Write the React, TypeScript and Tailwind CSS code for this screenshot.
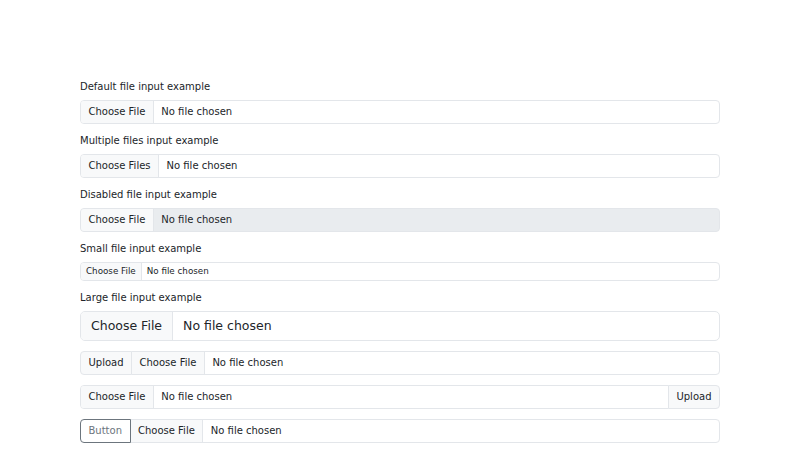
import React from "react";

const font = { fontFamily: '"DejaVu Sans", Verdana, sans-serif' };

function FileBtn({ label = "Choose File", size = "md" }: { label?: string; size?: "sm" | "md" | "lg" }) {
  const cls =
    size === "sm"
      ? "px-[5px] text-[8.75px]"
      : size === "lg"
      ? "px-[10px] text-[12.5px]"
      : "px-[7.5px] text-[10px]";
  return (
    <div className={`flex h-full items-center pb-px bg-[#f8f9fa] border-r border-[#e3e6ea] ${cls}`}>{label}</div>
  );
}

function FileInput({ label = "Choose File", size = "md", disabled = false, extra = "rounded-[4px]" }: { label?: string; size?: "sm" | "md" | "lg"; disabled?: boolean; extra?: string }) {
  const h = size === "sm" ? "h-[19px]" : size === "lg" ? "h-[30px]" : "h-[24px]";
  const txt =
    size === "sm"
      ? "pl-[5px] text-[8.75px]"
      : size === "lg"
      ? "pl-[10px] text-[12.5px]"
      : "pl-[7.5px] text-[10px]";
  const radius = size === "sm" ? "rounded-[3px]" : size === "lg" ? "rounded-[5px]" : "";
  return (
    <div
      className={`flex flex-1 items-center overflow-hidden border border-[#e3e6ea] text-[#212529] ${h} ${extra} ${radius} ${disabled ? "bg-[#e9ecef]" : "bg-white"}`}
    >
      <FileBtn label={label} size={size} />
      <div className={`pb-px ${txt}`}>No file chosen</div>
    </div>
  );
}

function Field({ title, children }: { title: string; children: React.ReactNode }) {
  return (
    <div className="mb-[10px]">
      <div className="mb-[7px] text-[10px] leading-[13px] text-[#212529]">{title}</div>
      <div className="flex">{children}</div>
    </div>
  );
}

export default function App() {
  return (
    <div className="min-h-[450px] w-[800px] bg-white" style={font}>
      <div className="mx-auto w-[640px] pt-[80px] leading-[15px]">
        <Field title="Default file input example">
          <FileInput />
        </Field>
        <Field title="Multiple files input example">
          <FileInput label="Choose Files" />
        </Field>
        <Field title="Disabled file input example">
          <FileInput disabled />
        </Field>
        <Field title="Small file input example">
          <FileInput size="sm" />
        </Field>
        <Field title="Large file input example">
          <FileInput size="lg" />
        </Field>

        <div className="mb-[10px] flex h-[24px]">
          <div className="flex items-center pb-px rounded-l-[4px] border border-[#e3e6ea] bg-[#f8f9fa] px-[7.5px] text-[10px] text-[#212529]">
            Upload
          </div>
          <FileInput extra="rounded-r-[4px] -ml-px" />
        </div>

        <div className="mb-[10px] flex h-[24px]">
          <FileInput extra="rounded-l-[4px]" />
          <div className="-ml-px flex items-center pb-px rounded-r-[4px] border border-[#e3e6ea] bg-[#f8f9fa] px-[7.5px] text-[10px] text-[#212529]">
            Upload
          </div>
        </div>

        <div className="mb-[10px] flex h-[24px]">
          <div className="z-10 flex items-center pb-px rounded-l-[4px] border border-[#6c757d] bg-white px-[7.5px] text-[10px] text-[#6c757d]">
            Button
          </div>
          <FileInput extra="rounded-r-[4px] -ml-px" />
        </div>
      </div>
    </div>
  );
}
